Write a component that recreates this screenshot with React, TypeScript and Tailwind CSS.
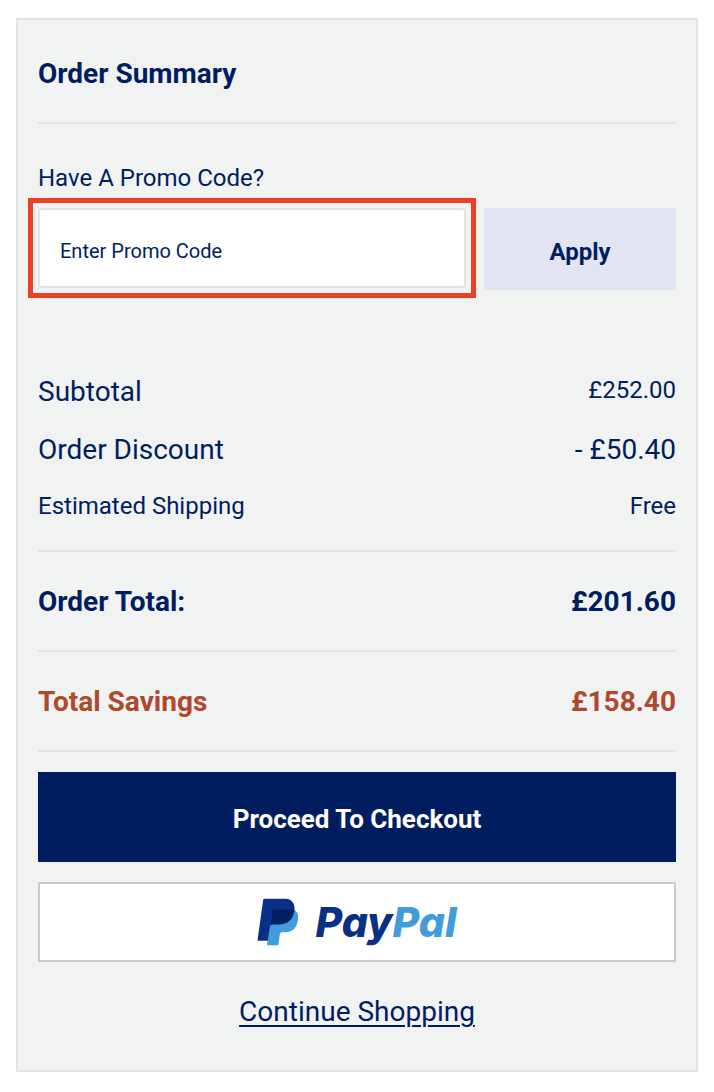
import React, { useState } from 'react';

interface SummaryRow {
    label: string;
    value: string;
    labelClass: string;
    valueClass: string;
}

const LARGE = 'text-[28px] leading-[40px]';
const REGULAR = 'text-[24px] leading-[36px]';

const rows: SummaryRow[] = [
    { label: 'Subtotal', value: '£252.00', labelClass: LARGE, valueClass: REGULAR },
    { label: 'Order Discount', value: '- £50.40', labelClass: LARGE, valueClass: LARGE },
    { label: 'Estimated Shipping', value: 'Free', labelClass: REGULAR, valueClass: REGULAR },
];

// PayPal monogram
const PayPalMark: React.FC = () => (
    <svg viewBox="50 49 129 147" className="h-12 w-[42px]" aria-hidden="true">
        <path
            d="M73 51H138C156 51 168 66 165 87C160 118 143 129 118 130H101C95 130 92 132 91 138L85 180H54Q51 180 52 176L69 54Q70 51 73 51Z"
            fill="#0a3085"
        />
        <path
            d="M165 86C175 92 178 102 176 115C172 142 158 154 136 154H128C123 154 121 156 120 161L116 191Q115 194 112 194H83Q80 194 81 190L91 130Z"
            fill="#429bda"
        />
        <path
            d="M102 84H153C158 84 162 84 165 86C161 118 143 130 118 130H101C95 130 92 132 91 136L98 88Q98 84 102 84Z"
            fill="#021f63"
        />
    </svg>
);

// Label on the left, amount on the right, with a rule underneath
const TotalRow: React.FC<{ label: string; value: string; className: string }> = ({
    label,
    value,
    className
}) => (
    <dl
        className={`flex items-center justify-between border-b-2 border-[#e2e4e3] pt-[30px] pb-7 text-[28px] leading-[40px] font-bold ${className}`}
    >
        <dt>{label}</dt>
        <dd>{value}</dd>
    </dl>
);

const App: React.FC = () => {
    const [promoCode, setPromoCode] = useState('');

    return (
        <main className="bg-white px-4 py-[18px] font-['Roboto','Liberation_Sans',sans-serif] text-[#001e5f]">
            <section className="border-2 border-[#e2e4e3] bg-[#f0f3f2] px-5 pb-[38px]">
                <h2 className="border-b-2 border-[#e2e4e3] pt-[34px] pb-7 text-[28px] leading-[40px] font-bold">
                    Order Summary
                </h2>

                {/* Promo code */}
                <form className="pt-9" onSubmit={(e) => e.preventDefault()}>
                    <label htmlFor="promo" className="block text-[24px] leading-[36px]">
                        Have A Promo Code?
                    </label>
                    <div className="mt-3 flex items-start gap-[18px]">
                        <div className="min-w-0 flex-1 outline-5 outline-offset-5 outline-[#ec4024]">
                            <input
                                id="promo"
                                type="text"
                                value={promoCode}
                                onChange={(e) => setPromoCode(e.target.value)}
                                placeholder="Enter Promo Code"
                                className="block h-20 w-full rounded-sm border-2 border-[#e2e4e3] bg-white px-5 pt-1.5 text-[20px] outline-none placeholder:text-[#001e5f]"
                            />
                        </div>
                        <button
                            type="submit"
                            className="h-[82px] w-48 bg-[#e2e4f1] pt-1.5 text-[24px] font-bold"
                        >
                            Apply
                        </button>
                    </div>
                </form>

                {/* Breakdown */}
                <dl className="mt-[82px] flex flex-col gap-[18px] border-b-2 border-[#e2e4e3] pb-[26px]">
                    {rows.map((row) => (
                        <div key={row.label} className="flex items-start justify-between">
                            <dt className={row.labelClass}>{row.label}</dt>
                            <dd className={row.valueClass}>{row.value}</dd>
                        </div>
                    ))}
                </dl>
                <TotalRow label="Order Total:" value="£201.60" className="text-[#001e5f]" />
                <TotalRow label="Total Savings" value="£158.40" className="text-[#ae4a2b]" />

                {/* Actions */}
                <div className="mt-5 flex flex-col gap-5">
                    <button
                        type="button"
                        className="h-[90px] bg-[#001e5f] pt-1 text-[26px] font-bold text-white"
                    >
                        Proceed To Checkout
                    </button>
                    <button
                        type="button"
                        className="flex h-20 items-center justify-center gap-4 border-2 border-[#c9cbca] bg-white"
                    >
                        <PayPalMark />
                        <span className="font-['Inter',sans-serif] text-[41px] leading-[48px] font-extrabold text-[#0a3085] italic [font-feature-settings:'cv11']">
                            Pay<span className="text-[#429bda]">Pal</span>
                        </span>
                    </button>
                </div>
                <p className="mt-[30px] text-center text-[28px] leading-[40px]">
                    <a href="#" className="underline decoration-2 underline-offset-4">
                        Continue Shopping
                    </a>
                </p>
            </section>
        </main>
    );
};

export default App;
